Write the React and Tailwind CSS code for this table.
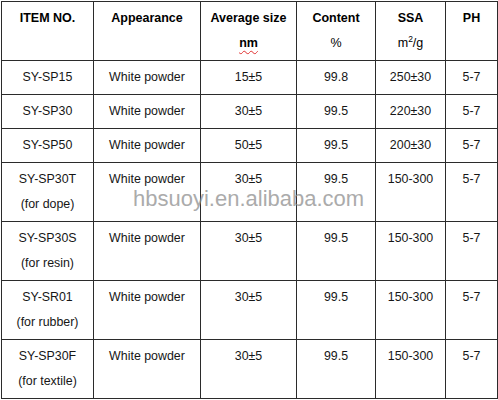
import React from "react";

const rows = [
  ["SY-SP15", null, "15±5", "99.8", "250±30", "5-7"],
  ["SY-SP30", null, "30±5", "99.5", "220±30", "5-7"],
  ["SY-SP50", null, "50±5", "99.5", "200±30", "5-7"],
  ["SY-SP30T", "(for dope)", "30±5", "99.5", "150-300", "5-7"],
  ["SY-SP30S", "(for resin)", "30±5", "99.5", "150-300", "5-7"],
  ["SY-SR01", "(for rubber)", "30±5", "99.5", "150-300", "5-7"],
  ["SY-SP30F", "(for textile)", "30±5", "99.5", "150-300", "5-7"],
];

const cell = "border-r border-b border-[#2b2b2b] pt-[4px] text-center leading-[24.5px]";

export default function App() {
  return (
    <div
      className="relative w-[498px] h-[400px] bg-white overflow-hidden text-[#161616]"
      style={{ fontFamily: '"Liberation Sans", Arial, sans-serif' }}
    >
      <div className="ml-[1px] mt-[1px] w-fit border-l border-t border-[#2b2b2b] grid grid-cols-[92px_107px_96px_79px_70px_52px] grid-rows-[59px_34px_34px_34px_59px_59px_59px_59px] text-[12.4px]">
        <div className={`${cell} font-bold text-[12.5px] text-black`}>ITEM NO.</div>
        <div className={`${cell} font-bold text-[12.5px] text-black`}>Appearance</div>
        <div className={`${cell} font-bold text-[12.5px] text-black`}>
          <div>Average size</div>
          <div>
            <span className="underline decoration-wavy decoration-[#e03030] decoration-[1px] underline-offset-[3px]">nm</span>
          </div>
        </div>
        <div className={`${cell} text-[12.5px] text-black`}>
          <div className="font-bold">Content</div>
          <div>%</div>
        </div>
        <div className={`${cell} text-[12.5px] text-black`}>
          <div className="font-bold">SSA</div>
          <div>
            m<span className="text-[8.5px] relative top-[-5px]">2</span>/g
          </div>
        </div>
        <div className={`${cell} font-bold text-[12.5px] text-black`}>PH</div>
        {rows.map((r, i) => (
          <React.Fragment key={i}>
            <div className={cell}>
              <div>{r[0]}</div>
              {r[1] && <div>{r[1]}</div>}
            </div>
            <div className={cell}>White powder</div>
            <div className={cell}>{r[2]}</div>
            <div className={cell}>{r[3]}</div>
            <div className={cell}>{r[4]}</div>
            <div className={cell}>{r[5]}</div>
          </React.Fragment>
        ))}
      </div>
      <div className="absolute left-[133px] top-[188px] text-[22px] leading-[22px] text-[#8f8f8f] opacity-75 whitespace-nowrap pointer-events-none">
        hbsuoyi.en.alibaba.com
      </div>
    </div>
  );
}
